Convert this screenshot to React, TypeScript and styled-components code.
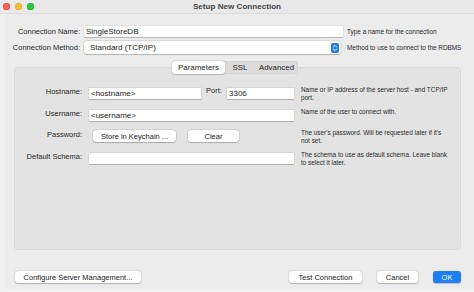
import React from "react";
import styled, { createGlobalStyle } from "styled-components";

const Global = createGlobalStyle`
  html, body { margin: 0; padding: 0; background: #ececec; }
  body { font-family: "Liberation Sans", Arial, Helvetica, sans-serif; color: #252525; }
  * { box-sizing: border-box; }
`;

const Window = styled.div`
  width: 474px;
  height: 292px;
  background: #ececec;
  display: flex;
  flex-direction: column;
  overflow: hidden;
`;

const TitleBar = styled.div`
  height: 14px;
  display: grid;
  grid-template-columns: 1fr auto 1fr;
  align-items: center;
  background: #e9e9e9;
  border-bottom: 1px solid #dcdcdc;
`;

const Lights = styled.div`
  display: flex;
  gap: 5px;
  padding-left: 3px;
`;

const Light = styled.span<{ $c: string; $b: string }>`
  width: 7px;
  height: 7px;
  border-radius: 50%;
  background: ${(p) => p.$c};
  box-shadow: inset 0 0 0 0.5px ${(p) => p.$b};
`;

const Title = styled.div`
  font-size: 8.1px;
  font-weight: bold;
  color: #454545;
  line-height: 13px;
`;

const Body = styled.div`
  flex: 1;
  display: flex;
  flex-direction: column;
  box-shadow: inset 5px 0 0 #f1f1f1, inset 0 -3px 0 #f1f1f1;
`;

const TopForm = styled.div`
  display: grid;
  grid-template-columns: 80px 259px 1fr;
  grid-template-rows: 11px 13px;
  column-gap: 4px;
  row-gap: 4px;
  align-items: center;
  padding-top: 12px;
`;

const TopLabel = styled.div`
  font-size: 7.5px;
  line-height: 9px;
  text-align: right;
  color: #262626;
  white-space: nowrap;
`;

const Help = styled.div`
  font-size: 6.4px;
  line-height: 8px;
  color: #2a2a2a;
  white-space: nowrap;
`;

const TextInput = styled.input<{ $w?: number }>`
  width: ${(p) => (p.$w ? `${p.$w}px` : "100%")};
  height: 11px;
  margin: 0;
  padding: 0 2px;
  border: none;
  outline: none;
  background: #ffffff;
  font-family: "Liberation Sans", Arial, sans-serif;
  font-size: 8px;
  color: #222;
  box-shadow: 0 0 0 0.5px rgba(0, 0, 0, 0.1), 0 0.5px 0.5px rgba(0, 0, 0, 0.18);
`;

const Select = styled.div`
  width: 257px;
  height: 13px;
  display: flex;
  align-items: center;
  padding: 0 2px 0 6px;
  background: #ffffff;
  border-radius: 3px;
  font-size: 8px;
  color: #222;
  box-shadow: 0 0 0 0.5px rgba(0, 0, 0, 0.12), 0 0.5px 1px rgba(0, 0, 0, 0.2);
`;

const SelectText = styled.span`
  flex: 1;
`;

const Stepper = () => (
  <svg width="8" height="10" viewBox="0 0 8 10">
    <rect x="0" y="0" width="8" height="10" rx="2" fill="#1f7cf4" />
    <path d="M2.3 4 L4 2.3 L5.7 4" stroke="#fff" strokeWidth="1" fill="none" strokeLinecap="round" strokeLinejoin="round" />
    <path d="M2.3 6 L4 7.7 L5.7 6" stroke="#fff" strokeWidth="1" fill="none" strokeLinecap="round" strokeLinejoin="round" />
  </svg>
);

const TabArea = styled.div`
  margin: 7px 13px 0 14px;
  display: flex;
  flex-direction: column;
  align-items: center;
`;

const TabBar = styled.div`
  position: relative;
  z-index: 1;
  display: flex;
  height: 13px;
  margin-bottom: -7px;
  margin-right: 5px;
  background: #dcdcdc;
  border-radius: 4px;
  box-shadow: inset 0 0 0 0.5px rgba(0, 0, 0, 0.06);
`;

const Tab = styled.div<{ $w: number; $active?: boolean }>`
  width: ${(p) => p.$w}px;
  height: 13px;
  display: flex;
  align-items: center;
  justify-content: center;
  font-size: 7.9px;
  color: #222;
  border-radius: 3px;
  background: ${(p) => (p.$active ? "#ffffff" : "transparent")};
  box-shadow: ${(p) => (p.$active ? "0 0 0 0.5px rgba(0,0,0,0.12), 0 0.5px 1px rgba(0,0,0,0.15)" : "none")};
`;

const Panel = styled.div`
  width: 447px;
  height: 183px;
  background: #e3e3e3;
  border: 1px solid #d9d9d9;
  border-radius: 4px;
  padding-top: 18px;
`;

const FieldGrid = styled.div`
  display: grid;
  grid-template-columns: 67px 205px 1fr;
  grid-template-rows: 22px 21px 22px 22px;
  column-gap: 7px;
  align-items: start;
`;

const FieldLabel = styled.div`
  padding-top: 2px;
  font-size: 7.5px;
  line-height: 8px;
  text-align: right;
  color: #262626;
  white-space: nowrap;
`;

const Control = styled.div<{ $top?: number }>`
  padding-top: ${(p) => (p.$top ?? 2)}px;
  display: flex;
  align-items: flex-start;
`;

const HostControl = styled(Control)`
  justify-content: space-between;
`;

const PortLabel = styled.span`
  font-size: 7.5px;
  line-height: 8px;
  color: #262626;
  margin-top: -1px;
`;

const PushButton = styled.div<{ $w: number; $primary?: boolean }>`
  width: ${(p) => p.$w}px;
  height: 12px;
  display: flex;
  align-items: center;
  justify-content: center;
  border-radius: 3px;
  font-size: 7.5px;
  white-space: nowrap;
  color: ${(p) => (p.$primary ? "#ffffff" : "#222")};
  background: ${(p) => (p.$primary ? "#1d7ff8" : "#ffffff")};
  box-shadow: ${(p) =>
    p.$primary
      ? "0 0.5px 1px rgba(0,0,0,0.2)"
      : "0 0 0 0.5px rgba(0,0,0,0.12), 0 0.5px 1px rgba(0,0,0,0.2)"};
`;

const ButtonPair = styled.div`
  display: flex;
  gap: 12px;
  margin-left: 4px;
`;

const Footer = styled.div`
  margin-top: 21px;
  padding: 0 13px 0 15px;
  display: flex;
  justify-content: space-between;
`;

const FooterRight = styled.div`
  display: flex;
  gap: 15px;
`;

export default function App() {
  return (
    <>
      <Global />
      <Window>
        <TitleBar>
          <Lights>
            <Light $c="#fe5f57" $b="#e0443e" />
            <Light $c="#febc2e" $b="#dea123" />
            <Light $c="#28c840" $b="#1aab29" />
          </Lights>
          <Title>Setup New Connection</Title>
          <div />
        </TitleBar>
        <Body>
          <TopForm>
            <TopLabel>Connection Name:</TopLabel>
            <TextInput readOnly defaultValue="SingleStoreDB" />
            <Help>Type a name for the connection</Help>
            <TopLabel>Connection Method:</TopLabel>
            <Select>
              <SelectText>Standard (TCP/IP)</SelectText>
              <Stepper />
            </Select>
            <Help>Method to use to connect to the RDBMS</Help>
          </TopForm>

          <TabArea>
            <TabBar>
              <Tab $w={53} $active>Parameters</Tab>
              <Tab $w={30}>SSL</Tab>
              <Tab $w={43}>Advanced</Tab>
            </TabBar>
            <Panel>
              <FieldGrid>
                <FieldLabel>Hostname:</FieldLabel>
                <HostControl>
                  <TextInput $w={112} readOnly defaultValue="<hostname>" />
                  <PortLabel>Port:</PortLabel>
                  <TextInput $w={67} readOnly defaultValue="3306" />
                </HostControl>
                <Help>
                  Name or IP address of the server host - and TCP/IP
                  <br />
                  port.
                </Help>

                <FieldLabel>Username:</FieldLabel>
                <Control>
                  <TextInput readOnly defaultValue="<username>" />
                </Control>
                <Help>Name of the user to connect with.</Help>

                <FieldLabel>Password:</FieldLabel>
                <Control $top={1}>
                  <ButtonPair>
                    <PushButton $w={83}>Store in Keychain ...</PushButton>
                    <PushButton $w={51}>Clear</PushButton>
                  </ButtonPair>
                </Control>
                <Help>
                  The user's password. Will be requested later if it's
                  <br />
                  not set.
                </Help>

                <FieldLabel>Default Schema:</FieldLabel>
                <Control>
                  <TextInput readOnly defaultValue="" />
                </Control>
                <Help>
                  The schema to use as default schema. Leave blank
                  <br />
                  to select it later.
                </Help>
              </FieldGrid>
            </Panel>
          </TabArea>

          <Footer>
            <PushButton $w={126}>Configure Server Management...</PushButton>
            <FooterRight>
              <PushButton $w={73}>Test Connection</PushButton>
              <PushButton $w={41}>Cancel</PushButton>
              <PushButton $w={28} $primary>OK</PushButton>
            </FooterRight>
          </Footer>
        </Body>
      </Window>
    </>
  );
}
